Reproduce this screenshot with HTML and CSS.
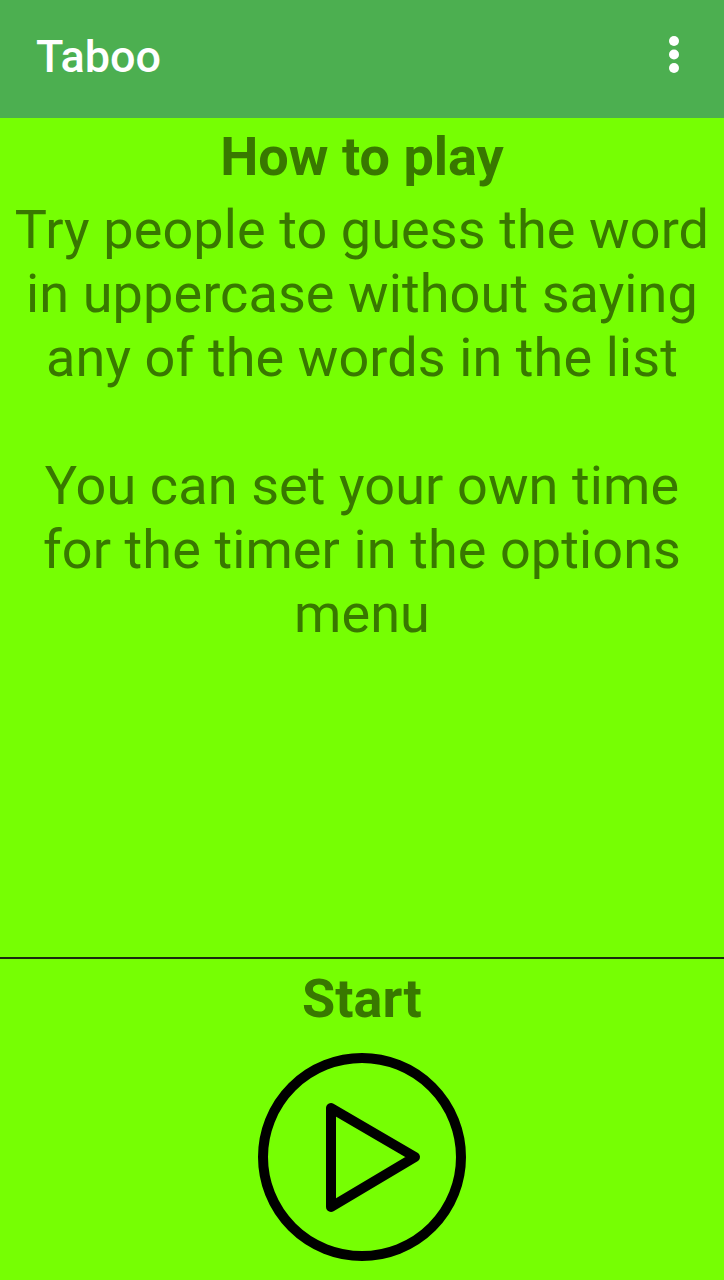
FILE: index.html
```html
<!DOCTYPE html>
<html>
	<head>
		<meta charset="utf-8">
		<title>Taboo</title>
		<link rel="stylesheet" href="styles.css">
	</head>
	<body>
		<div class="app_bar">
			<span class="app_bar__title">Taboo</span>
			<svg class="app_bar__menu" width="12" height="37" viewBox="0 0 12 37">
				<circle cx="6" cy="5" r="5"></circle>
				<circle cx="6" cy="18.5" r="5"></circle>
				<circle cx="6" cy="32" r="5"></circle>
			</svg>
		</div>
		<div class="how_to">
			<h1>How to play</h1>
			<p>Try people to guess the word in uppercase without saying any of the words in the list</p>
			<p class="gap">You can set your own time for the timer in the options menu</p>
		</div>
		<div class="start">
			<h2>Start</h2>
			<svg class="start__icon" width="208" height="208" viewBox="0 0 208 208">
				<circle cx="104" cy="104" r="99"></circle>
				<path d="M73 55 L73 154 L157 104 Z"></path>
			</svg>
		</div>
	</body>
</html>
```

FILE: styles.css
```css
html, body { margin:0; padding:0; }
body { display:flex; flex-direction:column; height:1280px; overflow:hidden; background-color:#76ff03; font-family:Roboto, sans-serif; color:#387800; }
h1, h2, p { margin:0; }
.app_bar { display:flex; flex:none; align-items:center; justify-content:space-between; height:118px; padding:0 44px 6px 36px; box-sizing:border-box; background-color:#4caf50; }
.app_bar__title { color:#fff; font-size:45px; font-weight:500; }
.app_bar__menu { margin-bottom:3px; fill:#fff; }
.how_to { flex:1; padding:7px 8px 0; text-align:center; }
.how_to h1 { margin-bottom:9px; font-size:54px; line-height:64px; font-weight:700; }
.how_to p { font-size:54px; line-height:64px; letter-spacing:.1px; }
.how_to p.gap { margin-top:64px; }
.start { display:flex; flex:none; flex-direction:column; align-items:center; border-top:2px solid #1a2a10; padding-bottom:19px; }
.start h2 { margin-top:8px; font-size:54px; line-height:64px; font-weight:700; }
.start__icon { margin-top:22px; }
.start__icon circle, .start__icon path { fill:none; stroke:#000; stroke-width:10; stroke-linejoin:round; }
```
